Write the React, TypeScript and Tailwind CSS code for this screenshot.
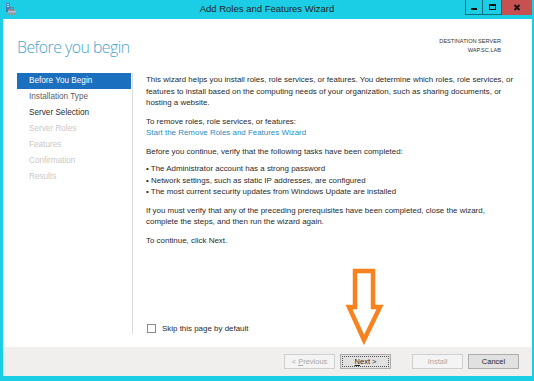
import React from 'react';

const font = { fontFamily: '"Liberation Sans", Arial, sans-serif' };

const steps = [
  { label: 'Before You Begin', state: 'active' },
  { label: 'Installation Type', state: 'done' },
  { label: 'Server Selection', state: 'next' },
  { label: 'Server Roles', state: 'off' },
  { label: 'Features', state: 'off' },
  { label: 'Confirmation', state: 'off' },
  { label: 'Results', state: 'off' },
];

const stepColor: Record<string, string> = {
  active: 'bg-[#1a6fbf] text-white',
  done: 'text-[#5e5e5e]',
  next: 'text-[#2e2e2e]',
  off: 'text-[#c9c9c9]',
};

const AppIcon = () => (
  <svg width="12" height="13" viewBox="0 0 12 13">
    <rect x="1" y="0" width="4" height="9" fill="#3a7fc4" />
    <rect x="1.8" y="1" width="2.4" height="1" fill="#cfe6f7" />
    <rect x="1.8" y="3" width="2.4" height="1" fill="#cfe6f7" />
    <rect x="3" y="6" width="8" height="6" rx="1" fill="#8a9aa8" />
    <rect x="5.5" y="4.5" width="3" height="2" fill="none" stroke="#6d7c88" strokeWidth="0.8" />
    <rect x="3" y="8.5" width="8" height="0.8" fill="#d9e1e7" />
  </svg>
);

const Arrow = () => (
  <svg className="absolute left-[343px] top-[266px]" width="44" height="80" viewBox="0 0 44 80">
    <polygon
      points="12,5 30,5 30,41 37,41 21,74 6,41 12,41"
      fill="none"
      stroke="#f7821f"
      strokeWidth="4.5"
      strokeLinejoin="miter"
    />
  </svg>
);

const CloseGlyph = () => (
  <svg width="30" height="15" viewBox="0 0 30 15">
    <rect x="0" y="0" width="30" height="15" fill="#c75050" />
    <path d="M12.5 5 L17.5 10 M17.5 5 L12.5 10" stroke="#111" strokeWidth="1.8" />
  </svg>
);

const FooterButton = ({ label, u, disabled, focus, className = '' }: { label: string; u?: number; disabled?: boolean; focus?: boolean; className?: string }) => (
  <div
    className={`w-[51px] h-[15px] flex items-center justify-center text-[7.5px] border ${
      disabled ? 'border-[#cfcfcf] bg-[#f4f4f4] text-[#a8a8a8]' : 'border-[#adadad] bg-[#e1e1e1] text-[#1e1e1e]'
    } ${className}`}
  >
    <div className={`w-full h-full flex items-center justify-center ${focus ? 'outline outline-1 outline-dotted outline-[#555] -outline-offset-2' : ''}`}>
      {u !== undefined ? (
        <span>
          {label.slice(0, u)}
          <span className="underline">{label[u]}</span>
          {label.slice(u + 1)}
        </span>
      ) : (
        label
      )}
    </div>
  </div>
);

export default function App() {
  return (
    <div className="relative w-[534px] h-[381px] bg-[#1bcde5] flex flex-col overflow-hidden" style={font}>
      {/* title bar */}
      <div className="h-[19px] flex items-start relative">
        <div className="pl-[5px] pt-[3px]">
          <AppIcon />
        </div>
        <div className="absolute left-0 right-0 top-[2px] text-center text-[9.5px] text-[#222]">Add Roles and Features Wizard</div>
        <div className="ml-auto mr-[2px] flex relative z-10">
          <div className="w-[18px] h-[15px] flex items-center justify-center border border-t-0 border-[#0b6f80]">
            <div className="w-[6px] h-[2px] bg-[#111] mt-[4px]" />
          </div>
          <div className="w-[19px] h-[15px] flex items-center justify-center border border-t-0 border-l-0 border-[#0b6f80]">
            <div className="w-[7px] h-[6px] border border-[#111] border-t-2" />
          </div>
          <div className="w-[30px] h-[15px] flex">
            <CloseGlyph />
          </div>
        </div>
      </div>

      {/* window body */}
      <div className="flex-1 flex flex-col ml-[3px] mr-[2px] mb-[5px]">
        <div className="flex-1 bg-white flex flex-col">
          <div className="h-[54px] flex justify-between px-[14px] pt-[16px]">
            <div className="text-[15.8px] text-[#4aa3cc] leading-[24px] tracking-[-0.5px]" style={{ fontFamily: '"Open Sans", "Liberation Sans", sans-serif', fontWeight: 300 }}>
              Before you begin
            </div>
            <div className="text-right text-[5.6px] leading-[9px] text-[#333] pt-[2px] pr-[17px]">
              <div>DESTINATION SERVER</div>
              <div>WAP.SC.LAB</div>
            </div>
          </div>

          <div className="flex-1 flex pb-[13px]">
            <div className="w-[130px] pl-[14px] border-r border-[#dcdcdc]">
              {steps.map((s) => (
                <div key={s.label} className={`w-[114px] h-[16px] flex items-center pl-[12px] text-[8.2px] ${stepColor[s.state]}`}>
                  {s.label}
                </div>
              ))}
            </div>

            <div className="flex-1 flex flex-col justify-between pl-[13px] pt-[1px] text-[7.95px] leading-[11.5px] text-[#2b2b2b] whitespace-nowrap">
              <div>
                <p className="mb-[7px]">
                  This wizard helps you install roles, role services, or features. You determine which roles, role services, or
                  <br />
                  features to install based on the computing needs of your organization, such as sharing documents, or
                  <br />
                  hosting a website.
                </p>
                <p className="mb-[7px]">
                  To remove roles, role services, or features:
                  <br />
                  <span className="text-[#2a8dbf]">Start the Remove Roles and Features Wizard</span>
                </p>
                <p className="mb-[6px]">Before you continue, verify that the following tasks have been completed:</p>
                <ul className="mb-[7px]">
                  <li>• The Administrator account has a strong password</li>
                  <li>• Network settings, such as static IP addresses, are configured</li>
                  <li>• The most current security updates from Windows Update are installed</li>
                </ul>
                <p className="mb-[7px]">
                  If you must verify that any of the preceding prerequisites have been completed, close the wizard,
                  <br />
                  complete the steps, and then run the wizard again.
                </p>
                <p>To continue, click Next.</p>
              </div>
              <div className="flex items-center gap-[6px] pl-[1px]">
                <div className="w-[9px] h-[9px] border border-[#8a8a8a] bg-white" />
                <span>Skip this page by default</span>
              </div>
            </div>
          </div>
        </div>

        <div className="h-[29px] bg-[#f0efed] flex items-center justify-end pr-[13px]">
          <FooterButton label="< Previous" u={2} disabled />
          <FooterButton label="Next >" u={0} focus className="ml-[5px]" />
          <FooterButton label="Install" disabled className="ml-[21px]" />
          <FooterButton label="Cancel" className="ml-[5px]" />
        </div>
      </div>

      <Arrow />
    </div>
  );
}
